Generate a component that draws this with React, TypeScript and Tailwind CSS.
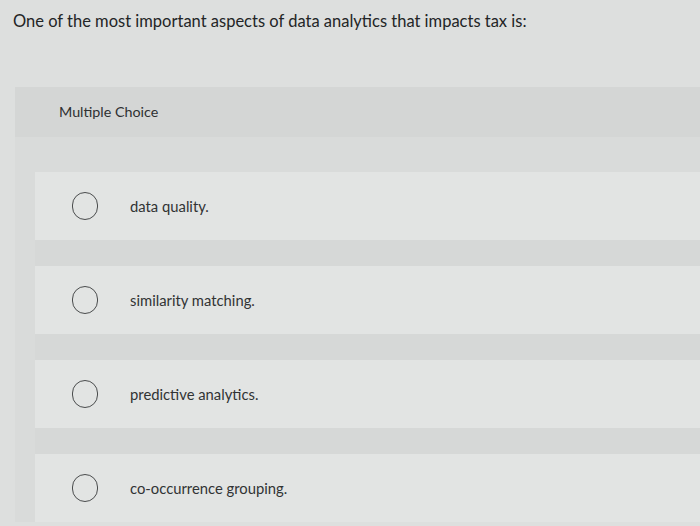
const OPTIONS = ["data quality.", "similarity matching.", "predictive analytics.", "co-occurrence grouping."];

function Radio() {
  return <span className="block h-[28px] w-[26px] shrink-0 rounded-full border-[1.5px] border-[#4a4c4d]" />;
}

export default function App() {
  return (
    <div
      className="h-[526px] w-[700px] overflow-hidden bg-[#dddfde] text-[#2b2d2e]"
      style={{ fontFamily: "Lato, 'Open Sans', sans-serif" }}
    >
      <p className="pl-[13px] pt-[9px] text-[16.5px] leading-[24px] text-[#232526]">
        One of the most important aspects of data analytics that impacts tax is:
      </p>

      <section className="ml-[15px] mt-[54px] bg-[#d4d6d5]">
        <div className="flex h-[50px] items-center pl-[44px] text-[14.3px] text-[#2e3031]">Multiple Choice</div>
        <div className="bg-[#d9dbda] pl-[20px] pt-[35px]">
          <div className="flex flex-col gap-[26px] bg-[#d6d8d7]">
            {OPTIONS.map((option) => (
              <div key={option} className="flex h-[68px] items-center bg-[#e2e4e3] pl-[37px]">
                <Radio />
                <span className="ml-[32px] text-[14.8px] text-[#313334]">{option}</span>
              </div>
            ))}
          </div>
        </div>
      </section>
    </div>
  );
}
